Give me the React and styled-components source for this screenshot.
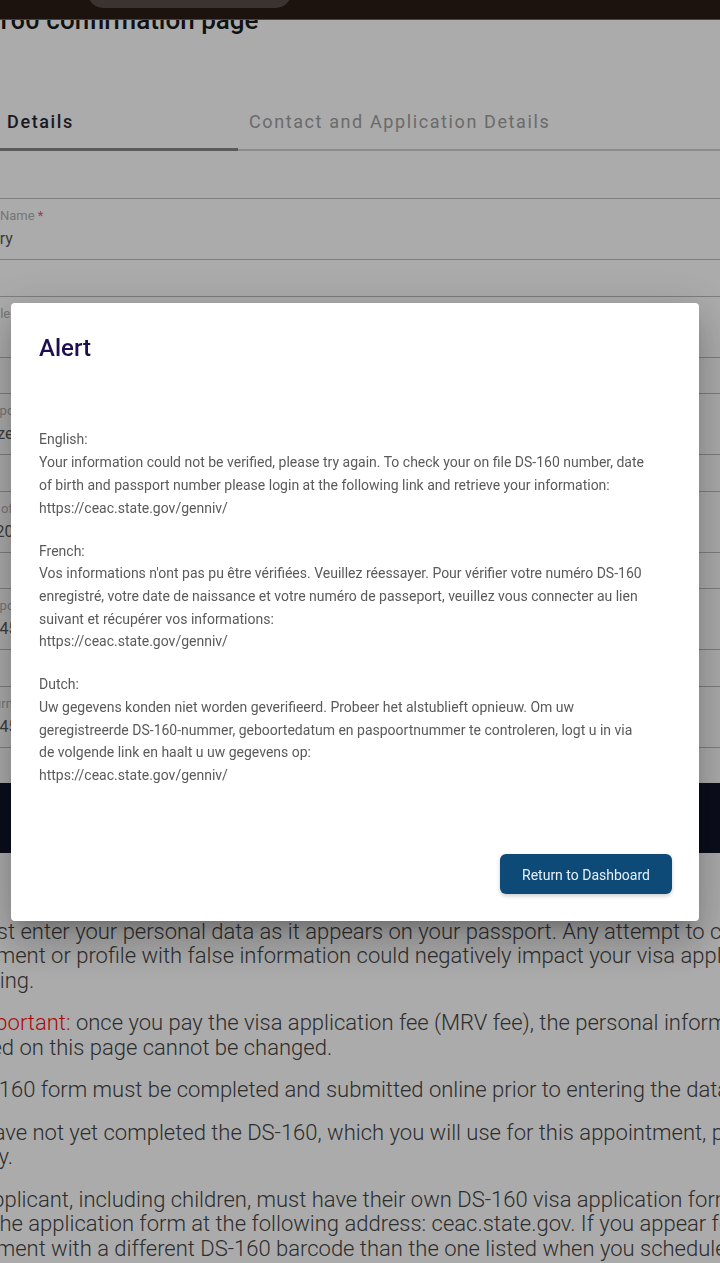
import styled, { createGlobalStyle } from 'styled-components';

const GlobalStyle = createGlobalStyle`
  * { box-sizing: border-box; }
  html, body {
    margin: 0;
    padding: 0;
    overflow: hidden;
    background: #fff;
  }
  body {
    font-family: Roboto, 'Liberation Sans', sans-serif;
  }
`;

const fields = [
  { label: 'First Name', required: true, value: 'Henry' },
  { label: 'Middle Name', value: '' },
  { label: 'Passport Issuing Country', value: 'Belize' },
  { label: 'Date of Birth', required: true, value: '03/20/1985' },
  { label: 'Passport Number', value: 'C01456789' },
  { label: 'Confirm Passport Number', value: 'C01456789' },
];

const messages = [
  {
    lang: 'English:',
    lines: [
      'Your information could not be verified, please try again. To check your on file DS-160 number, date',
      'of birth and passport number please login at the following link and retrieve your information:',
      'https://ceac.state.gov/genniv/',
    ],
  },
  {
    lang: 'French:',
    lines: [
      "Vos informations n'ont pas pu être vérifiées. Veuillez réessayer. Pour vérifier votre numéro DS-160",
      'enregistré, votre date de naissance et votre numéro de passeport, veuillez vous connecter au lien',
      'suivant et récupérer vos informations:',
      'https://ceac.state.gov/genniv/',
    ],
  },
  {
    lang: 'Dutch:',
    lines: [
      'Uw gegevens konden niet worden geverifieerd. Probeer het alstublieft opnieuw. Om uw',
      'geregistreerde DS-160-nummer, geboortedatum en paspoortnummer te controleren, logt u in via',
      'de volgende link en haalt u uw gegevens op:',
      'https://ceac.state.gov/genniv/',
    ],
  },
];

const App = () => {
  return (
    <>
      <GlobalStyle />
      <TopBar>
        <UrlPill />
      </TopBar>

      <Page>
        <PageTitle>DS-160 confirmation page</PageTitle>

        <Tabs>
          <Tab active>Personal Details</Tab>
          <Tab>Contact and Application Details</Tab>
        </Tabs>

        <Form>
          {fields.map(f => (
            <Field key={f.label}>
              <FieldLabel>
                {f.label}
                {f.required && <Required> *</Required>}
              </FieldLabel>
              <FieldValue>{f.value}</FieldValue>
            </Field>
          ))}
        </Form>

        <SubmitBar>Continue</SubmitBar>

        <Notes>
          <p>
            You must enter your personal data as it appears on your passport. Any attempt to create an
            <br />
            appointment or profile with false information could negatively impact your visa application
            <br />
            processing.
          </p>
          <p>
            <Warn>Very important:</Warn> once you pay the visa application fee (MRV fee), the personal information
            <br />
            displayed on this page cannot be changed.
          </p>
          <p>
            The DS-160 form must be completed and submitted online prior to entering the data on this page.
          </p>
          <p>
            If you have not yet completed the DS-160, which you will use for this appointment, please do so
            <br />
            promptly.
          </p>
          <p>
            Every applicant, including children, must have their own DS-160 visa application form.
            <br />
            Fill out the application form at the following address: ceac.state.gov. If you appear for your
            <br />
            appointment with a different DS-160 barcode than the one listed when you scheduled
          </p>
        </Notes>
      </Page>

      <Overlay>
        <Dialog>
          <DialogTitle>Alert</DialogTitle>
          <DialogBody>
            {messages.map(m => (
              <Message key={m.lang}>
                <div>{m.lang}</div>
                {m.lines.map(line => (
                  <div key={line}>{line}</div>
                ))}
              </Message>
            ))}
          </DialogBody>
          <DialogActions>
            <ReturnButton>Return to Dashboard</ReturnButton>
          </DialogActions>
        </Dialog>
      </Overlay>
    </>
  );
};

const TopBar = styled.div`
  position: fixed;
  top: 0;
  left: 0;
  right: 0;
  z-index: 20;
  display: flex;
  align-items: flex-start;
  height: 20px;
  padding-left: 88px;
  background: #1c130f;
  border-bottom: 1px solid #4a433f;
  overflow: hidden;
`;

const UrlPill = styled.div`
  width: 203px;
  height: 30px;
  margin-top: -22px;
  border-radius: 15px;
  background: #3b3330;
`;

const Page = styled.div`
  width: 900px;
  margin-left: -86px;
  padding-top: 5px;
`;

const PageTitle = styled.h1`
  margin: 0;
  padding-left: 40px;
  font-size: 26px;
  line-height: 31px;
  font-weight: 500;
  color: #1a1a1a;
`;

const Tabs = styled.div`
  display: flex;
  margin-top: 60px;
  margin-left: -8px;
  border-bottom: 2px solid #d1d1d1;
`;

const Tab = styled.div`
  flex: 0 0 332px;
  padding: 15px 11px ${p => (p.active ? '13px' : '16px')};
  margin-bottom: ${p => (p.active ? '-2px' : '0')};
  border-bottom: ${p => (p.active ? '3px solid #868686' : 'none')};
  font-size: 18px;
  line-height: 22px;
  letter-spacing: 1.6px;
  font-weight: ${p => (p.active ? 500 : 400)};
  color: ${p => (p.active ? '#282838' : '#a0a0a0')};
  white-space: nowrap;
`;

const Form = styled.div`
  display: flex;
  flex-direction: column;
  gap: 35.6px;
  margin-top: 47px;
`;

const Field = styled.div`
  height: 62px;
  padding: 9px 12px 10px 57px;
  border-top: 1px solid #bbbbbb;
  border-bottom: 1px solid #bbbbbb;
`;

const FieldLabel = styled.div`
  font-size: 13px;
  line-height: 16px;
  color: #b0b0b0;
`;

const Required = styled.span`
  color: #e06070;
`;

const FieldValue = styled.div`
  margin-top: 5px;
  font-size: 16px;
  line-height: 20px;
  color: #5a5a5a;
`;

const SubmitBar = styled.div`
  display: flex;
  align-items: center;
  justify-content: center;
  height: 70px;
  margin-top: 35px;
  background: #0f1529;
  color: #fff;
  font-size: 18px;
`;

const Notes = styled.div`
  margin-top: 67px;
  padding-left: 9px;
  font-size: 22px;
  font-weight: 300;
  line-height: 24.5px;
  color: #444;
  white-space: nowrap;

  p {
    margin: 0 0 18px;
  }
`;

const Warn = styled.span`
  color: #ff1010;
`;

const Overlay = styled.div`
  position: fixed;
  inset: 0;
  z-index: 10;
  display: flex;
  align-items: flex-start;
  padding: 303px 0 0 11px;
  background: rgba(0, 0, 0, 0.33);
`;

const Dialog = styled.div`
  width: 688px;
  background: #fff;
  border-radius: 4px;
  box-shadow: 0 11px 15px -7px rgba(0, 0, 0, 0.2),
    0 24px 38px 3px rgba(0, 0, 0, 0.14), 0 9px 46px 8px rgba(0, 0, 0, 0.12);
`;

const DialogTitle = styled.h2`
  margin: 0;
  padding: 26px 28px 0;
  font-size: 24px;
  line-height: 38.4px;
  font-weight: 500;
  color: #1e1050;
`;

const DialogBody = styled.div`
  padding: 61px 28px 0;
  font-size: 14px;
  line-height: 22.7px;
  color: #5a5a5a;
  white-space: nowrap;
`;

const Message = styled.div`
  & + & {
    margin-top: 20.3px;
  }
`;

const DialogActions = styled.div`
  display: flex;
  justify-content: flex-end;
  padding: 67.5px 27px 27px;
`;

const ReturnButton = styled.button`
  width: 172px;
  height: 40px;
  border: none;
  border-radius: 6px;
  background: #0d4a78;
  color: #e6f0fa;
  font-family: Roboto, 'Liberation Sans', sans-serif;
  font-size: 14px;
  padding-top: 3px;
  box-shadow: 0 2px 4px rgba(0, 0, 0, 0.2);
  cursor: pointer;
`;

export default App;
